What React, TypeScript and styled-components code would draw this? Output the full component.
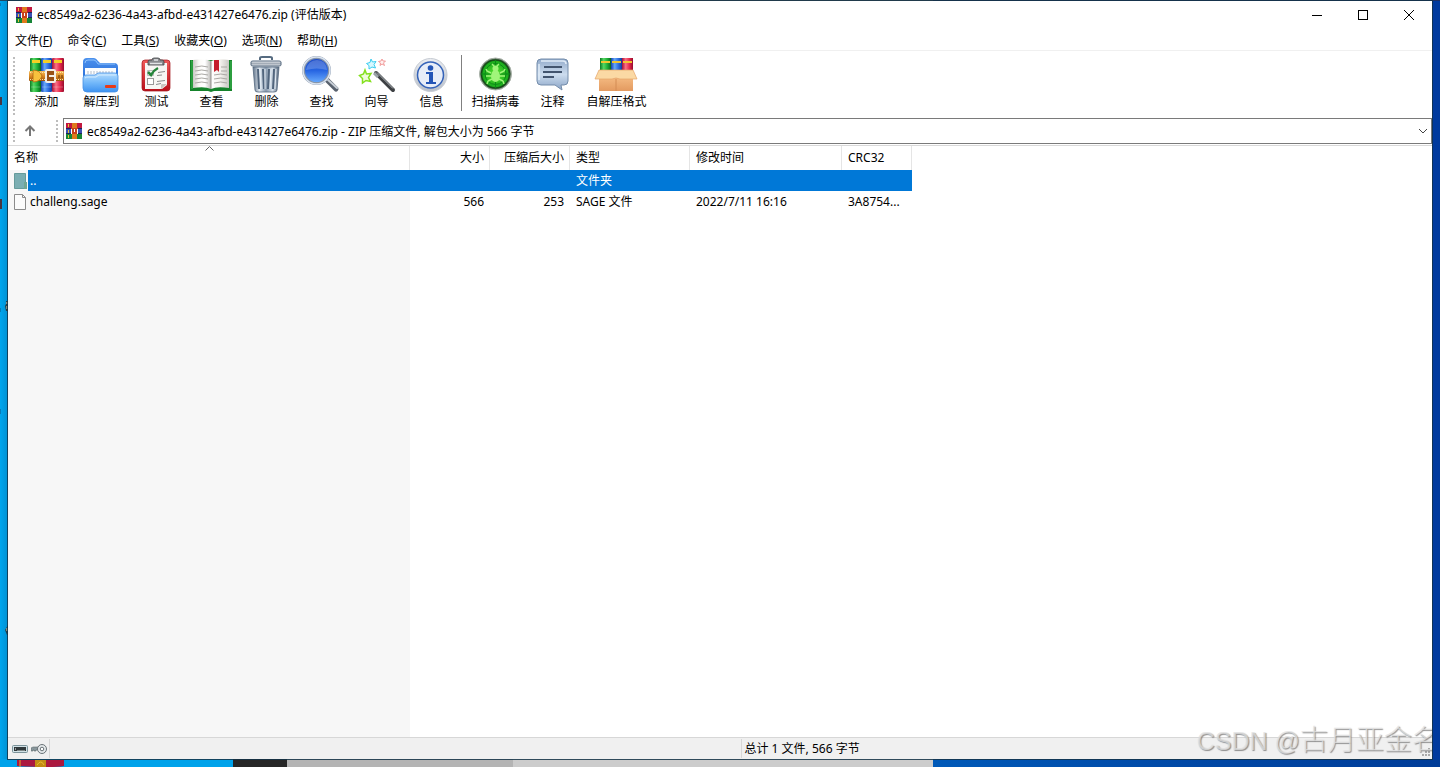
import React from "react";
import styled, { createGlobalStyle } from "styled-components";

const GlobalStyle = createGlobalStyle`
  * { box-sizing: border-box; }
  body { margin: 0; }
  body, button, select, table {
    font-family: "Noto Sans", "Noto Sans CJK SC", sans-serif;
    font-size: 12px;
    line-height: 16px;
    color: #000;
  }
  button { border: 0; padding: 0; background: none; cursor: default; }
  svg { display: block; flex: none; }
`;

const Desktop = styled.div`
  position: relative;
  display: flex;
  min-height: 100vh;
  padding: 1px 8px 8px;
  overflow: hidden;
  background:
    linear-gradient(90deg, #1b4a66 286px, #686868 286px, #686868 933px, #1b2f66 933px) top / 100% 1px no-repeat,
    linear-gradient(90deg, #00a2ea 233px, #262626 233px, #262626 287px, #b4b4b4 287px, #b4b4b4 513px, #cccccc 513px, #cccccc 933px, #0059b8 933px, #0047a5 1200px, #003c98) bottom / 100% 8px no-repeat,
    linear-gradient(90deg, #00a6ee, #0090d2 8px, #0a3fa5 8px, #003a9e);
`;

const Window = styled.main`
  position: relative;
  display: flex;
  flex: 1;
  flex-direction: column;
  min-width: 0;
  overflow: hidden;
  background: #fff;
  box-shadow: 0 0 0 1px rgba(20, 50, 70, 0.85);
`;

const TitleBar = styled.header`
  display: flex;
  align-items: center;
  height: 28px;
  padding-left: 8px;
`;

const Title = styled.h1`
  flex: 1;
  margin: 0 0 0 5px;
  font-size: 12px;
  font-weight: 400;
  white-space: nowrap;
`;

const WindowButton = styled.button`
  display: grid;
  place-items: center;
  width: 46px;
  height: 28px;
`;

const MenuBar = styled.nav`
  display: flex;
  gap: 15px;
  align-items: center;
  height: 22px;
  padding: 2px 7px 0;
  border-bottom: 1px solid #f0f0f0;
  u { text-underline-offset: 1px; }
`;

const ToolBar = styled.div`
  display: flex;
  align-items: flex-start;
  height: 66px;
  padding: 4px 0 0 5px;
`;

const Grip = styled.span<{ $tall?: boolean }>`
  flex: none;
  width: 2px;
  height: ${(p) => (p.$tall ? 62 : 26)}px;
  background: repeating-linear-gradient(#fff 0, #fff 2px, #bdbdbd 2px, #bdbdbd 4px);
`;

const ToolButtons = styled.div`
  display: flex;
  margin-left: 4px;
`;

const ToolButton = styled.button<{ $width?: number }>`
  display: flex;
  flex-direction: column;
  align-items: center;
  width: ${(p) => p.$width ?? 55}px;
  padding-top: 1px;
  white-space: nowrap;
`;

const Separator = styled.span`
  width: 1px;
  height: 56px;
  margin: 0 4px 0 2px;
  background: #808080;
`;

const AddressRow = styled.div`
  display: flex;
  align-items: center;
  height: 29px;
  padding-left: 5px;
  border-bottom: 1px solid #d9d9d9;
`;

const UpButton = styled.button`
  display: grid;
  place-items: center;
  width: 30px;
  height: 24px;
  margin-right: 11px;
`;

const AddressBox = styled.label`
  position: relative;
  display: flex;
  flex: 1;
  align-items: center;
  height: 26px;
  margin-left: 5px;
  padding-left: 2px;
  border: 1px solid #7a7a7a;
`;

const AddressSelect = styled.select`
  flex: 1;
  height: 24px;
  margin: 0;
  padding: 2px 24px 0 5px;
  border: 0;
  background: transparent;
  appearance: none;
`;

const Chevron = styled.svg`
  position: absolute;
  right: 4px;
  pointer-events: none;
`;

const FileList = styled.section`
  flex: 1;
  background: linear-gradient(90deg, #f7f7f7 402px, #fff 402px);
`;

const FileTable = styled.table`
  width: 904px;
  table-layout: fixed;
  border-collapse: separate;
  border-spacing: 0;
`;

const HeadCell = styled.th<{ $right?: boolean }>`
  position: relative;
  height: 24px;
  padding: 0 5px 0 6px;
  border-right: 1px solid #e5e5e5;
  background: #fff;
  font-weight: 400;
  text-align: ${(p) => (p.$right ? "right" : "left")};
`;

const SortMark = styled.svg`
  position: absolute;
  top: 0;
  left: 50%;
  margin-left: -4px;
`;

const Cell = styled.td<{ $right?: boolean }>`
  height: 21px;
  padding: 0 6px;
  text-align: ${(p) => (p.$right ? "right" : "left")};
  white-space: nowrap;
`;

const NameCell = styled(Cell)`
  padding: 0 5px;
`;

const FileName = styled.span`
  display: flex;
  gap: 3px;
  align-items: center;
`;

const Row = styled.tr<{ $selected?: boolean }>`
  ${Cell} {
    color: ${(p) => (p.$selected ? "#fff" : "#000")};
    background: ${(p) => (p.$selected ? "#0078d7" : "transparent")};
  }
  ${NameCell} {
    background: ${(p) => (p.$selected ? "linear-gradient(90deg, #f7f7f7 20px, #0078d7 20px)" : "transparent")};
  }
`;

const StatusBar = styled.footer`
  display: flex;
  align-items: stretch;
  height: 22px;
  padding: 1px 0;
  border-top: 1px solid #d7d7d7;
  background: #f0f0f0;
`;

const StatusIcons = styled.div`
  display: flex;
  gap: 3px;
  align-items: center;
  width: 42px;
  padding-left: 4px;
  border-right: 1px solid #d7d7d7;
`;

const StatusPane = styled.div`
  display: flex;
  flex: 1;
  align-items: center;
  padding-left: 3px;
  & + & { border-left: 1px solid #d7d7d7; }
`;

const Resizer = styled.svg`
  align-self: flex-end;
  margin: 0 1px 1px auto;
`;

const Watermark = styled.div`
  position: absolute;
  right: -8px;
  bottom: -2px;
  color: rgba(225, 225, 225, 0.75);
  font-family: "Liberation Sans", "Noto Sans CJK SC", sans-serif;
  font-size: 28px;
  font-weight: 300;
  line-height: 40px;
  text-shadow: 1px 1px 1px rgba(110, 110, 110, 0.75);
  white-space: nowrap;
  pointer-events: none;
  span { font-size: 25px; }
`;

const DesktopSpecks = styled.svg`
  position: absolute;
  left: 0;
  top: 0;
`;

const DesktopShortcut = styled.svg`
  position: absolute;
  left: 17px;
  bottom: 0;
`;

const HiddenDefs = styled.svg`
  position: absolute;
`;

const Gradient = ({ id, stops, across }: { id: string; stops: string[]; across?: boolean }) => (
  <linearGradient id={id} x1="0" y1="0" x2={across ? "1" : "0"} y2={across ? "0" : "1"}>
    {stops.map((c, i) => (
      <stop key={i} offset={i / (stops.length - 1)} stopColor={c} />
    ))}
  </linearGradient>
);

const Art = ({ children }: { children: React.ReactNode }) => (
  <svg width="45" height="38" viewBox="0 0 45 38" aria-hidden="true">{children}</svg>
);

const SharedDefs = () => (
  <HiddenDefs width="0" height="0" aria-hidden="true">
    <defs>
      <Gradient id="bookGreen" across stops={["#0b7a23", "#55d862", "#1fae38", "#07661b"]} />
      <Gradient id="bookBlue" across stops={["#1440ae", "#65a8fa", "#2e6fe0", "#123a9c"]} />
      <Gradient id="bookRed" across stops={["#a80e35", "#fa7085", "#e52a4d", "#970b2c"]} />
      <Gradient id="belt" stops={["#f6bf5e", "#dd8b24", "#9d5208"]} />
      <Gradient id="folderBack" stops={["#4b91ee", "#1f62cf"]} />
      <Gradient id="folderFront" stops={["#b4dcfd", "#74b9fa", "#3e92f0"]} />
      <Gradient id="clip" stops={["#f05a5a", "#b90f1a"]} />
      <Gradient id="page" across stops={["#ffffff", "#f5f3ef", "#c9c7c3"]} />
      <Gradient id="pageLeft" across stops={["#c9c7c3", "#fbfaf7", "#ffffff", "#bab8b4"]} />
      <Gradient id="can" across stops={["#62748a", "#dfe7ef", "#8799ad", "#d4dee8", "#52647a"]} />
      <Gradient id="lens" stops={["#1c49c4", "#2765e2", "#6db0ff"]} />
      <Gradient id="steel" stops={["#f4f6f8", "#a3acb7", "#e6e9ee"]} />
      <Gradient id="disc" stops={["#eceef1", "#cfd4db", "#b9c0ca"]} />
      <Gradient id="bubble" stops={["#93abcb", "#ccdcee", "#8aa4c6"]} />
      <Gradient id="box" stops={["#f6bd84", "#e39a60"]} />
      <Gradient id="boxInner" stops={["#b2682f", "#ed9e62"]} />
      <radialGradient id="radar"><stop offset="0" stopColor="#5fe832" /><stop offset="1" stopColor="#12a51a" /></radialGradient>
    </defs>
  </HiddenDefs>
);

const AddArt = () => (
  <Art>
    <rect x="6" y="2" width="11" height="34" rx="1" fill="url(#bookGreen)" />
    <rect x="17" y="2" width="11" height="34" rx="1" fill="url(#bookBlue)" />
    <rect x="28" y="2" width="12" height="34" rx="1" fill="url(#bookRed)" />
    <path d="M8 5.500h8M19 5.500h8M30 5.500h8" stroke="#f4cf24" strokeWidth="3" />
    <path d="M7 31h9M18 31h9M29 31h10" stroke="#fff" strokeOpacity=".25" />
    <rect x="5" y="15" width="35" height="10" rx="1" fill="url(#belt)" />
    <path d="M6 16.500h33M6 23.500h33" stroke="#fde6a5" strokeDasharray="1 1" />
    <path d="M9 14q7 0 9 6q-2 6-9 6z" fill="#f8c13d" stroke="#a55a0c" strokeWidth=".7" />
    <rect x="22" y="14" width="9" height="12" rx="1" fill="#985015" stroke="#f3eee4" strokeWidth="2" />
    <path d="M25 20h6" stroke="#f3eee4" strokeWidth="2" />
    <path d="M35 19v3M38 19v3" stroke="#673507" />
  </Art>
);

const FolderArt = () => (
  <Art>
    <path d="M4 31V6q0-4 4-4h7q2 0 4 3l2 2h14q4 0 4 4v20z" fill="url(#folderBack)" />
    <path d="M6 7q0-3 3-3h6q2 0 4 4h17" fill="none" stroke="#8dc1fb" />
    <rect x="6" y="12" width="31" height="12" fill="#fbfdff" />
    <path d="M9 15v3M12 15v3M15 15v3M18 15v3M21 15v3M24 15v3M27 15v3M30 15v3M33 15v3" stroke="#b4bdc9" />
    <path d="M4 22q0-3 3-3h9l3-2h17q3 0 3 3v13q0 3-3 3H8q-4 0-4-4z" fill="url(#folderFront)" stroke="#458fe4" strokeWidth=".8" />
    <path d="M6 22q1-1 3-1h8l3-2h17" fill="none" stroke="#d4ecff" />
    <rect x="26" y="29" width="11" height="3" rx="1" fill="#e83a17" />
  </Art>
);

const TestArt = () => (
  <Art>
    <rect x="8" y="4" width="28" height="31" rx="3" fill="url(#clip)" stroke="#a2141a" strokeWidth=".7" />
    <path d="M11 7h22v22l-5 4H11z" fill="#f7f6f4" />
    <path d="M33 28l-6 5v-4q0-1 1-1z" fill="#c9c4c0" />
    <path d="M14 9V6q0-2 2-2h2q0-2 2-2h4q2 0 2 2h2q2 0 2 2v3z" fill="#8a8c90" stroke="#3f4144" strokeWidth=".8" />
    <path d="M16 7.500h12M20 4h4" stroke="#e2e4e6" strokeWidth="1.500" />
    <rect x="13.500" y="22.500" width="6" height="6" fill="#fff" stroke="#999" />
    <path d="M13.500 14.500h6v5h-6z" fill="none" stroke="#bbb" />
    <path d="M14 16l3 3q3-5 7-7" fill="none" stroke="#25843a" strokeWidth="2.500" />
    <path d="M24 16.500l7-1M23 19.500l5-.5M23 25.500l8-1M22 28.500l5-1" stroke="#8b8b8b" />
  </Art>
);

const ViewArt = () => (
  <Art>
    <path d="M1 4h42v31H25l-3 1-3-1H1z" fill="#15832b" />
    <path d="M2 5h1v28M42 5v28" stroke="#44b955" fill="none" />
    <path d="M4 4q12-2 18 1v28q-6-3-18-1z" fill="url(#pageLeft)" />
    <path d="M40 4q-12-2-18 1v28q6-3 18-1z" fill="url(#page)" />
    <path d="M22 5v28" stroke="#93918c" />
    <path d="M6 11q7-2 13 0M6 15q7-2 13 0M6 19q7-2 13 0M6 23q7-2 13 0M6 27q7-2 13 0M32 11h6M32 15h6M25 19q7-2 13 0M25 23q7-2 13 0M25 27q7-2 13 0" stroke="#aaa8a4" fill="none" />
    <path d="M25 4h5v12l-2-2-3 2z" fill="#c51d2b" />
  </Art>
);

const DeleteArt = () => (
  <Art>
    <path d="M16 4V2q0-1 2-1h8q2 0 2 1v2" fill="none" stroke="#566b80" strokeWidth="2" />
    <path d="M9 11h26l-2 23q0 2-3 2H14q-3 0-3-2z" fill="url(#can)" stroke="#53677d" strokeWidth=".8" />
    <path d="M14 13l1 20M19 13l1 20M25 13l-1 20M30 13l-1 20" stroke="#51657d" strokeWidth="2" />
    <path d="M16 13l1 20M21 13v20M27 13l-1 20M32 13l-1 20" stroke="#e4edf5" />
    <path d="M7 9V6q0-1 2-1h26q2 0 2 1v3q0 1-2 1H9q-2 0-2-1z" fill="url(#steel)" stroke="#53677d" />
  </Art>
);

const FindArt = () => (
  <Art>
    <path d="M28 24l9 9" stroke="#59626e" strokeWidth="5" strokeLinecap="round" />
    <path d="M28 23l10 9" stroke="#c7ced6" strokeWidth="2" strokeLinecap="round" />
    <circle cx="17.500" cy="14.500" r="13" fill="url(#lens)" stroke="#8795a9" strokeWidth="3" />
    <circle cx="17.500" cy="14.500" r="13.500" fill="none" stroke="#dbe4f0" strokeWidth="1.500" />
    <path d="M7 14q2-10 11-10t10 10q-10-3-21 0z" fill="#fff" fillOpacity=".2" />
  </Art>
);

const WizardArt = () => (
  <Art>
    <path d="M22 17l17 17" stroke="#3d4043" strokeWidth="4" strokeLinecap="round" />
    <path d="M20 17l4 4" stroke="#9ba2a7" strokeWidth="3" />
    <path d="M23 16.500l16 16" stroke="#b4babf" />
    <path d="M11 14l1.500 4 4.500-.5-2.500 4 2 4-4.500-1-3.500 2.500v-4.500l-3-3 4-1.500z" fill="#effbdb" stroke="#84e01d" strokeWidth="1.500" />
    <path d="M17 3l1.500 3 3.500-.5-2 3 1.500 3.500-3.500-1-3 2v-3.500l-2.500-2 3.500-1z" fill="#d9f8ff" stroke="#3bcdf0" />
    <path d="M28 3l1 2h2.500l-2 2 1 2.500-2.500-1.500-2 1.500.5-2.500-2-1.500 2.500-.5z" fill="#fff0ef" stroke="#ee8686" strokeWidth=".8" />
  </Art>
);

const InfoArt = () => (
  <Art>
    <circle cx="21.500" cy="19" r="16.500" fill="url(#disc)" stroke="#c6cbd3" />
    <circle cx="21.500" cy="19" r="13" fill="#e7edf8" stroke="#3563b9" strokeWidth="1.500" />
    <circle cx="21.500" cy="12" r="2.800" fill="#2355b7" />
    <path d="M17 16h7v10h3v2H17v-2h3v-8h-3z" fill="#2355b7" />
  </Art>
);

const VirusArt = () => (
  <Art>
    <circle cx="22.500" cy="18" r="16" fill="#687868" stroke="#a9b2a9" />
    <circle cx="22.500" cy="18" r="14" fill="url(#radar)" stroke="#174d19" strokeWidth="1.500" />
    <circle cx="22.500" cy="18" r="10.500" fill="none" stroke="#0b8a16" />
    <path d="M22.500 4v28M8 18h29" stroke="#0b8a16" />
    <ellipse cx="22.500" cy="20" rx="4.500" ry="6" fill="#a0f57a" />
    <circle cx="22.500" cy="12.500" r="3" fill="#a0f57a" />
    <path d="M18 17l-4-2-1-2M27 17l4-2 1-2M18 20h-5M27 20h5M19 23l-4 2-1 3M26 23l4 2 1 3M21 10l-2-2M24 10l2-2" fill="none" stroke="#a0f57a" strokeWidth="1.500" />
  </Art>
);

const CommentArt = () => (
  <Art>
    <path d="M11 3h23q4 0 4 4v18q0 4-4 4h-3l1 5-7-5H11q-4 0-4-4V7q0-4 4-4z" fill="url(#bubble)" stroke="#748dab" />
    <path d="M11 5h22q3 0 3 3M9 8v16" fill="none" stroke="#e0ebf7" strokeWidth="1.500" />
    <path d="M14 11h18M13 16h19M13 21h11" stroke="#42546e" strokeWidth="2" />
  </Art>
);

const SfxArt = () => (
  <Art>
    <rect x="6" y="2" width="11" height="18" fill="url(#bookGreen)" />
    <rect x="17" y="2" width="11" height="18" fill="url(#bookBlue)" />
    <rect x="28" y="2" width="11" height="18" fill="url(#bookRed)" />
    <path d="M7 6h9M18 6h9M29 6h9" stroke="#f2c52e" strokeWidth="2" />
    <path d="M5 14h34v10H5z" fill="url(#boxInner)" />
    <path d="M5 20h34v15H5z" fill="url(#box)" />
    <path d="M5 14h34l4 9H26l-4-1-4 1H1z" fill="#fbd9a4" stroke="#e5a468" strokeWidth=".7" />
    <path d="M22 23v12" stroke="#d48c55" />
  </Art>
);

const ArchiveIcon = () => (
  <svg width="16" height="16" viewBox="0 0 16 16" aria-hidden="true">
    <rect width="16" height="5" fill="#c2183f" />
    <rect y="5" width="16" height="6" fill="#3a50b4" />
    <rect y="11" width="16" height="5" fill="#168536" />
    <path d="M0 5.500h16M0 10.500h16" stroke="#1b2657" />
    <path d="M2.500 1v3M2.500 7v3M2.500 12v3" stroke="#e6c638" />
    <rect x="6" width="5" height="16" fill="#e07a1c" />
    <rect x="5" y="5" width="7" height="6" fill="#c8401c" />
    <path d="M5.500 11V6M11.500 11V6M8.500 6v3" fill="none" stroke="#fff" />
  </svg>
);

const MENUS = [
  ["文件", "F"],
  ["命令", "C"],
  ["工具", "S"],
  ["收藏夹", "O"],
  ["选项", "N"],
  ["帮助", "H"],
];

const TOOLS = [
  { label: "添加", Icon: AddArt },
  { label: "解压到", Icon: FolderArt },
  { label: "测试", Icon: TestArt },
  { label: "查看", Icon: ViewArt },
  { label: "删除", Icon: DeleteArt },
  { label: "查找", Icon: FindArt },
  { label: "向导", Icon: WizardArt },
  { label: "信息", Icon: InfoArt },
];

const EXTRA_TOOLS = [
  { label: "扫描病毒", Icon: VirusArt, width: 59 },
  { label: "注释", Icon: CommentArt, width: 55 },
  { label: "自解压格式", Icon: SfxArt, width: 73 },
];

const ARCHIVE = "ec8549a2-6236-4a43-afbd-e431427e6476.zip";

export default function App() {
  return (
    <Desktop>
      <GlobalStyle />
      <SharedDefs />
      <DesktopSpecks width="8" height="767" viewBox="0 0 8 767" aria-hidden="true">
        <path d="M0 97h2v8H0zM0 199h2v10H0z" fill="#473541" />
        <path d="M0 3h1v3H0zM0 308h1v4H0zM0 409h1v5H0z" fill="#087bb7" />
        <path d="M8 301h-2v3l-1 2 1 5h2zM8 625l-3 5 2 5h1z" fill="#25404b" />
        <path d="M7 302v2M7 306v3M7 628v3" stroke="#e7d7b0" />
      </DesktopSpecks>
      <Window>
        <TitleBar>
          <ArchiveIcon />
          <Title>{ARCHIVE} (评估版本)</Title>
          <WindowButton aria-label="最小化">
            <svg width="10" height="10"><path d="M0 5.500h10" stroke="#000" /></svg>
          </WindowButton>
          <WindowButton aria-label="最大化">
            <svg width="10" height="10"><rect x=".5" y=".5" width="9" height="9" fill="none" stroke="#000" /></svg>
          </WindowButton>
          <WindowButton aria-label="关闭">
            <svg width="10" height="10"><path d="M0 0l10 10M10 0L0 10" stroke="#000" /></svg>
          </WindowButton>
        </TitleBar>
        <MenuBar>
          {MENUS.map(([name, key]) => (
            <button key={key}>{name}(<u>{key}</u>)</button>
          ))}
        </MenuBar>
        <ToolBar>
          <Grip $tall />
          <ToolButtons>
            {TOOLS.map(({ label, Icon }) => (
              <ToolButton key={label}><Icon />{label}</ToolButton>
            ))}
            <Separator />
            {EXTRA_TOOLS.map(({ label, Icon, width }) => (
              <ToolButton key={label} $width={width}><Icon />{label}</ToolButton>
            ))}
          </ToolButtons>
        </ToolBar>
        <AddressRow>
          <Grip />
          <UpButton aria-label="上一级">
            <svg width="12" height="12" viewBox="0 0 12 12"><path d="M6 11V2M1.500 6L6 1.500 10.500 6" fill="none" stroke="#777" strokeWidth="2" /></svg>
          </UpButton>
          <Grip />
          <AddressBox>
            <ArchiveIcon />
            <AddressSelect aria-label="路径">
              <option>{ARCHIVE} - ZIP 压缩文件, 解包大小为 566 字节</option>
            </AddressSelect>
            <Chevron width="8" height="6" viewBox="0 0 8 6"><path d="M0 1l4 4 4-4" fill="none" stroke="#444" /></Chevron>
          </AddressBox>
        </AddressRow>
        <FileList>
          <FileTable>
            <colgroup>
              <col width="402" /><col width="80" /><col width="80" /><col width="120" /><col width="152" /><col width="70" />
            </colgroup>
            <thead>
              <tr>
                <HeadCell>
                  名称
                  <SortMark width="9" height="5"><path d="M.5 4.500l4-4 4 4" fill="none" stroke="#666" /></SortMark>
                </HeadCell>
                <HeadCell $right>大小</HeadCell>
                <HeadCell $right>压缩后大小</HeadCell>
                <HeadCell>类型</HeadCell>
                <HeadCell>修改时间</HeadCell>
                <HeadCell>CRC32</HeadCell>
              </tr>
            </thead>
            <tbody>
              <Row $selected>
                <NameCell>
                  <FileName>
                    <svg width="14" height="16"><path d="M1.500.5h11v15h-11z" fill="#7baeb2" stroke="#669b9b" /><path d="M11 9h3v7h-3z" fill="#72a694" /></svg>
                    ..
                  </FileName>
                </NameCell>
                <Cell $right /><Cell $right /><Cell>文件夹</Cell><Cell /><Cell />
              </Row>
              <Row>
                <NameCell>
                  <FileName>
                    <svg width="14" height="16"><path d="M1.500.5h8l3 3v12h-11z" fill="#fbfbfb" stroke="#8b8b8b" /><path d="M9.500.5v3h3" fill="none" stroke="#8b8b8b" /></svg>
                    challeng.sage
                  </FileName>
                </NameCell>
                <Cell $right>566</Cell>
                <Cell $right>253</Cell>
                <Cell>SAGE 文件</Cell>
                <Cell>2022/7/11 16:16</Cell>
                <Cell>3A8754...</Cell>
              </Row>
            </tbody>
          </FileTable>
        </FileList>
        <StatusBar>
          <StatusIcons>
            <svg width="16" height="8"><rect x=".5" y=".5" width="15" height="7" rx="1" fill="#d1e1e6" stroke="#7b9299" /><path d="M2 2h12v4H2z" fill="#30383a" /><path d="M3 4h1" stroke="#fff" /><path d="M5 5.500h8" stroke="#7e8788" /></svg>
            <svg width="16" height="10"><path d="M0 4l2-1h6v3H5v1H3V6H2v1H0z" fill="#89979c" stroke="#606c71" strokeWidth=".6" /><circle cx="11" cy="5" r="4.500" fill="#e5e9eb" stroke="#697276" /><circle cx="11" cy="5" r="1.800" fill="#fff" stroke="#697276" /></svg>
          </StatusIcons>
          <StatusPane />
          <StatusPane>
            总计 1 文件, 566 字节
            <Resizer width="9" height="9"><path d="M0 7h2M3 7h2M6 7h2M3 4h2M6 4h2M6 1h2" stroke="#aaa" strokeWidth="2" /></Resizer>
          </StatusPane>
        </StatusBar>
        <Watermark><span>CSDN @</span>古月亚金名</Watermark>
      </Window>
      <DesktopShortcut width="47" height="7" aria-hidden="true">
        <path d="M0 0h47v6q-10 2-47 0z" fill="#ab183f" /><path d="M3 0v7" stroke="#e8a724" /><path d="M18 0h11v7H18z" fill="#c38c13" /><path d="M20 5q4-6 7 0" fill="none" stroke="#e9bd30" />
      </DesktopShortcut>
    </Desktop>
  );
}
